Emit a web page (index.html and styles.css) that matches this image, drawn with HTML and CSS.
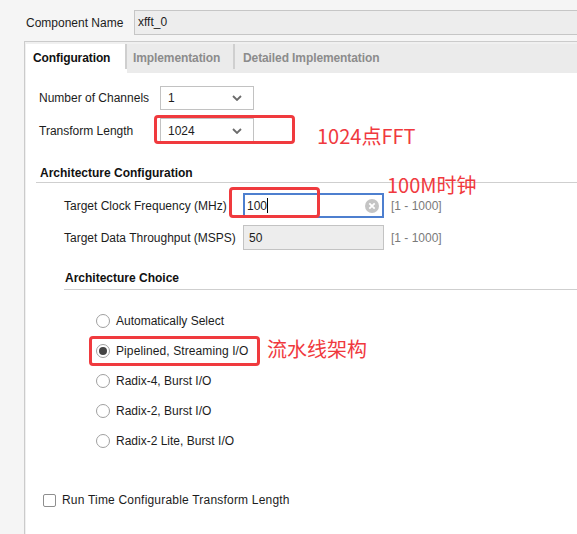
FILE: index.html
```html
<!DOCTYPE html>
<html>
<head>
<meta charset="utf-8">
<link rel="stylesheet" href="styles.css">
</head>
<body>
<div class="top">
  <span class="top-label">Component Name</span>
  <div class="name-input">xfft_0</div>
</div>
<div class="panel">
  <div class="tabs">
    <div class="tab active">Configuration</div>
    <div class="tab">Implementation</div>
    <div class="tab">Detailed Implementation</div>
  </div>
  <div class="content">
    <div class="row sel-row first">
      <span class="lbl lbl-sel">Number of Channels</span>
      <div class="select"><span>1</span><svg class="chev" width="10" height="6" viewBox="0 0 10 6"><path d="M1 1 L5 5 L9 1" fill="none" stroke="#6b6b6b" stroke-width="1.8"/></svg></div>
    </div>
    <div class="row sel-row second">
      <span class="lbl lbl-sel">Transform Length</span>
      <div class="select"><span>1024</span><svg class="chev" width="10" height="6" viewBox="0 0 10 6"><path d="M1 1 L5 5 L9 1" fill="none" stroke="#6b6b6b" stroke-width="1.8"/></svg></div>
      <div class="mark mark-len"></div>
      <div class="note note-len">1024点FFT</div>
    </div>

    <div class="heading h1">Architecture Configuration</div>

    <div class="row in-row r-clk">
      <span class="lbl lbl-in">Target Clock Frequency (MHz)</span>
      <div class="input focus"><span class="val">100</span><span class="caret"></span>
        <svg class="clear" width="14" height="14" viewBox="0 0 14 14"><circle cx="7" cy="7" r="7" fill="#c4c4c4"/><path d="M4.3 4.3 L9.7 9.7 M9.7 4.3 L4.3 9.7" stroke="#fff" stroke-width="1.8"/></svg>
      </div>
      <span class="range">[1 - 1000]</span>
      <div class="mark mark-clk"></div>
      <div class="note note-clk">100M时钟</div>
    </div>
    <div class="row in-row r-thr">
      <span class="lbl lbl-in">Target Data Throughput (MSPS)</span>
      <div class="input disabled"><span class="val">50</span></div>
      <span class="range">[1 - 1000]</span>
    </div>

    <div class="heading h2">Architecture Choice</div>

    <div class="radios">
      <div class="radio-row"><span class="radio"></span><span>Automatically Select</span></div>
      <div class="radio-row sel"><span class="radio on"></span><span class="wide">Pipelined, Streaming I/O</span>
        <div class="mark mark-pipe"></div>
        <div class="note note-pipe">流水线架构</div>
      </div>
      <div class="radio-row"><span class="radio"></span><span>Radix-4, Burst I/O</span></div>
      <div class="radio-row"><span class="radio"></span><span>Radix-2, Burst I/O</span></div>
      <div class="radio-row"><span class="radio"></span><span>Radix-2 Lite, Burst I/O</span></div>
    </div>

    <div class="check-row"><span class="checkbox"></span><span class="check-label">Run Time Configurable Transform Length</span></div>
  </div>
</div>
</body>
</html>
```
FILE: styles.css
```css
html, body {
  margin: 0;
  padding: 0;
}
body {
  width: 577px;
  height: 534px;
  overflow: hidden;
  background: #f5f5f5;
  font-family: "Liberation Sans", Arial, sans-serif;
  font-size: 12px;
  color: #1c1c1c;
}
.top {
  display: flex;
  align-items: center;
  padding: 10px 0 0 26px;
  height: 25px;
}
.top-label {
  width: 108px;
}
.name-input {
  flex: 1;
  height: 23px;
  line-height: 23px;
  border: 1px solid #c6c6c6;
  border-right: none;
  background: #ededed;
  padding-left: 3px;
}
.panel {
  margin: 6px 0 0 24px;
  border-top: 1px solid #cbcbcb;
  border-left: 1px solid #cbcbcb;
  background: #f0f0f0;
  padding: 2px 0 0 1px;
  height: 490px;
}
.tabs {
  display: flex;
  height: 29px;
  background: #ebebeb;
}
.tab {
  position: relative;
  padding: 0 8px 0 6px;
  line-height: 29px;
  color: #8c8c8c;
  font-weight: bold;
  letter-spacing: -0.1px;
}
.tab + .tab::before {
  content: "";
  position: absolute;
  left: -2px;
  top: 0;
  height: 25px;
  border-left: 2px solid #cfcfcf;
}
.tab.active {
  background: #fff;
  color: #111;
  width: 86px;
  padding-left: 7px;
}
.tab:nth-child(2) { width: 94px; }
.tab:nth-child(3) { padding-left: 8px; width: 144px; }
.content {
  background: #fff;
  height: 461px;
  padding-top: 12px;
  position: relative;
}
.row {
  display: flex;
  align-items: center;
  position: relative;
}
.sel-row { padding-left: 13px; height: 26px; }
.sel-row.second { margin-top: 7px; height: 25px; }
.lbl-sel { width: 121px; }
.select {
  height: 24px;
  border: 1px solid #c2c2c2;
  background: #fff;
  display: flex;
  align-items: center;
  justify-content: space-between;
  padding: 0 0 0 7px;
  box-sizing: border-box;
  width: 94px;
}
.sel-row.second .select { height: 25px; }
.chev { margin-right: 11px; }
.heading {
  font-weight: bold;
  color: #111;
  border-bottom: 1px solid #cfcfcf;
  padding-bottom: 3px;
}
.h1 {
  margin: 23px 0 0 10px;
  padding-left: 4px;
  height: 15px;
  line-height: 15px;
  padding-bottom: 1px;
}
.in-row { padding-left: 38px; height: 25px; }
.r-clk { margin-top: 10px; }
.r-thr { margin-top: 7px; }
.lbl-in { width: 179px; }
.input {
  width: 141px;
  height: 25px;
  box-sizing: border-box;
  display: flex;
  align-items: center;
  padding-left: 4px;
  position: relative;
}
.input.focus { border: 2px solid #4d7fcf; padding-left: 2px; }
.input.disabled { border: 1px solid #c3c3c3; background: #ededed; padding-left: 5px; }
.caret {
  display: inline-block;
  width: 1px;
  height: 15px;
  background: #000;
}
.clear { position: absolute; right: 3px; top: 4px; }
.range { color: #7a7a7a; margin-left: 7px; }
.h2 {
  margin: 21px 0 0 38px;
  height: 15px;
  line-height: 15px;
  padding-left: 1px;
}
.radios {
  margin-top: 16px;
  padding-left: 70px;
}
.radio-row {
  display: flex;
  align-items: center;
  height: 30px;
  position: relative;
}
.radio {
  width: 14px;
  height: 14px;
  border: 1px solid #a0a0a0;
  border-radius: 50%;
  box-sizing: border-box;
  margin-right: 6px;
  display: flex;
  align-items: center;
  justify-content: center;
  background: #fff;
}
.radio.on::after {
  content: "";
  width: 8px;
  height: 8px;
  border-radius: 50%;
  background: #444;
}
.wide { letter-spacing: 0.1px; }
.check-row {
  display: flex;
  align-items: center;
  margin-top: 37px;
  padding-left: 17px;
}
.check-label { letter-spacing: 0.2px; }
.checkbox {
  width: 13px;
  height: 13px;
  box-sizing: border-box;
  border: 1px solid #8e8e8e;
  border-radius: 2px;
  margin-right: 6px;
  background: #fff;
}
.mark {
  position: absolute;
  border: 3px solid #f03a3e;
  border-radius: 4px;
  box-sizing: border-box;
}
.note {
  position: absolute;
  color: #f0393e;
  font-family: "Noto Sans CJK SC", "Noto Sans", sans-serif;
  font-size: 20px;
  line-height: 24px;
  white-space: nowrap;
}
.mark-len { left: 128px; top: -3px; width: 141px; height: 29px; }
.note-len { left: 291px; top: 6px; }
.mark-clk { left: 203px; top: -6px; width: 91px; height: 31px; }
.note-clk { left: 361px; top: -20px; }
.mark-pipe { left: -7px; top: 0; width: 171px; height: 30px; }
.note-pipe { left: 171px; top: 1px; }
```
